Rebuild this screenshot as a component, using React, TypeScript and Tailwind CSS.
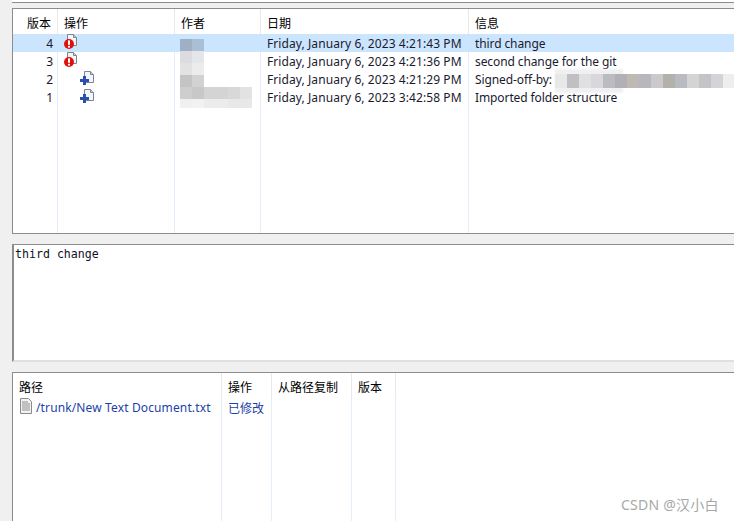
const uiFont = "font-['Noto_Sans','Noto_Sans_CJK_SC',sans-serif]";

const revisions = [
  { rev: '4', kind: 'error', date: 'Friday, January 6, 2023 4:21:43 PM', msg: 'third change' },
  { rev: '3', kind: 'error', date: 'Friday, January 6, 2023 4:21:36 PM', msg: 'second change for the git' },
  { rev: '2', kind: 'add', date: 'Friday, January 6, 2023 4:21:29 PM', msg: 'Signed-off-by:' },
  { rev: '1', kind: 'add', date: 'Friday, January 6, 2023 3:42:58 PM', msg: 'Imported folder structure' },
];

const authorMosaic = [
  ['#a0b0c4', '#aabfd4', '', '', '', ''],
  ['#dcdce0', '#e4e6ea', '', '', '', ''],
  ['#e2e2e2', '#ececec', '', '', '', ''],
  ['#c4c4c6', '#d2d2d2', '', '', '', ''],
  ['#cecece', '#c8c8c8', '#d4d4d4', '#d4d4d4', '#d8d8d8', '#e2e2e2'],
  ['#f0f0f2', '#f2f2f2', '#ececec', '#ececec', '#e8e8e8', '#e8e8e8'],
];

const signedMosaic = [
  '#e8e8e8', '#c0c0c2', '#e0e0e2', '#d8d8da', '#bcbcc0', '#b0b0b6', '#c0b8b4', '#b8b8bc',
  '#cacaca', '#b4b0ac', '#b8bcc0', '#d4d4d4', '#c4c4c8', '#d4d4d6', '#eeeeee',
];

function PageIcon() {
  return (
    <svg width="10" height="12" viewBox="0 0 10 12" className="block">
      <path d="M.5.5h6l3 3v8h-9z" fill="#f4f5f7" stroke="#7b8496" />
      <path d="M6.5.5v3h3" fill="#c9ced8" stroke="#7b8496" />
    </svg>
  );
}

function ErrorIcon() {
  return (
    <span className="relative block w-[16px] h-[16px]">
      <span className="absolute left-[3px] top-[-1px]">
        <PageIcon />
      </span>
      <svg width="10" height="10" viewBox="0 0 10 10" className="absolute left-0 top-[4px]">
        <circle cx="5" cy="5" r="5" fill="#e0110c" />
        <rect x="4" y="1.4" width="2" height="4.4" fill="#fff" />
        <rect x="4" y="6.8" width="2" height="1.8" fill="#fff" />
      </svg>
    </span>
  );
}

function AddIcon() {
  return (
    <span className="relative block w-[16px] h-[16px]">
      <span className="absolute left-[4px] top-0">
        <PageIcon />
      </span>
      <svg width="9" height="9" viewBox="0 0 9 9" className="absolute left-0 top-[5px]">
        <path d="M3 0h3v3h3v3H6v3H3V6H0V3h3z" fill="#2a4fb0" />
      </svg>
    </span>
  );
}

function DocIcon() {
  return (
    <svg width="12" height="16" viewBox="0 0 12 16" className="shrink-0 mt-[1px]">
      <path d="M.5.5h8l3 3v12H.5z" fill="#f2f2f2" stroke="#8a8a8a" />
      <path d="M2 4h6M2 6h8M2 8h8M2 10h8M2 12h8" stroke="#8f8f8f" />
    </svg>
  );
}

function LogTable() {
  return (
    <div className="relative h-[227px] border border-r-0 border-[#8c8c8c] bg-white overflow-hidden">
      <div className="flex h-[25px] text-[12px] text-black">
        <div className="w-[45px] h-full border-r border-[#e8e8e8] pr-[6px] pt-[5px] flex items-center justify-end">版本</div>
        <div className="w-[117px] h-full border-r border-[#e8e8e8] pl-[6px] pt-[5px] flex items-center">操作</div>
        <div className="w-[86px] h-full border-r border-[#e8e8e8] pl-[6px] pt-[5px] flex items-center">作者</div>
        <div className="w-[208px] h-full border-r border-[#e8e8e8] pl-[6px] pt-[5px] flex items-center">日期</div>
        <div className="pl-[6px] pt-[5px] flex items-center h-full">信息</div>
      </div>
      <div className="relative">
        <div className="absolute inset-0 h-[199px] flex pointer-events-none">
          <div className="w-[45px] border-r border-[#e3eefa]" />
          <div className="w-[117px] border-r border-[#e3eefa]" />
          <div className="w-[86px] border-r border-[#e3eefa]" />
          <div className="w-[208px] border-r border-[#e3eefa]" />
        </div>
        {revisions.map((r, i) => (
          <div
            key={r.rev}
            className={`relative flex h-[18px] items-center text-[12px] text-[#1a1a2e] ${i === 0 ? 'bg-[#cce5ff]' : ''}`}
          >
            <div className="w-[45px] pr-[5px] pt-[2px] text-right">{r.rev}</div>
            <div className={`w-[117px] ${r.kind === 'add' ? 'pl-[22px]' : 'pl-[6px]'}`}>
              {r.kind === 'error' ? <ErrorIcon /> : <AddIcon />}
            </div>
            <div className="w-[86px]" />
            <div className="w-[208px] pl-[6px] pt-[2px] whitespace-nowrap tracking-[0.08px]">{r.date}</div>
            <div className="pl-[6px] pt-[2px] whitespace-nowrap tracking-[-0.1px]">{r.msg}</div>
          </div>
        ))}
      </div>

      {/* blurred author names */}
      <div className="absolute left-[167px] top-[30px] blur-[0.6px]">
        {authorMosaic.map((row, y) => (
          <div key={y} className={`flex ${y === 5 ? 'h-[9px]' : 'h-[12px]'}`}>
            {row.map((c, x) => (
              <div key={x} className="w-[12px] h-full" style={{ backgroundColor: c || 'transparent' }} />
            ))}
          </div>
        ))}
      </div>
      {/* blurred email */}
      <div className="absolute left-[542px] top-[60px] w-[68px] h-[24px] bg-[#f0f0f2] blur-[1px]" />
      <div className="absolute left-[542px] top-[65px] flex h-[14px] blur-[0.5px]">
        {signedMosaic.map((c, x) => (
          <div key={x} className="w-[12px] h-full" style={{ backgroundColor: c }} />
        ))}
      </div>
    </div>
  );
}

function MessagePanel() {
  return (
    <div className="h-[118px] border-t border-l-2 border-[#8c8c8c] bg-white border-b-2 border-b-[#e0e0e0] pl-[1px] pt-[2px]">
      <p className="font-['DejaVu_Sans_Mono',monospace] text-[11.6px] leading-[15px] text-[#101028]">third change</p>
    </div>
  );
}

function ChangedPaths() {
  return (
    <div className="flex-1 border-t border-l border-[#8c8c8c] bg-white text-[12px]">
      <div className="flex h-[24px] text-black">
        <div className="w-[209px] border-r border-[#e8e8e8] pl-[6px] pt-[6px] flex items-center">路径</div>
        <div className="w-[50px] border-r border-[#e8e8e8] pl-[6px] pt-[6px] flex items-center">操作</div>
        <div className="w-[80px] border-r border-[#e8e8e8] pl-[6px] pt-[6px] flex items-center">从路径复制</div>
        <div className="w-[44px] border-r border-[#e8e8e8] pl-[6px] pt-[6px] flex items-center">版本</div>
      </div>
      <div className="flex h-[124px] text-[#1d3fa8]">
        <div className="w-[209px] border-r border-[#e3eefa] pl-[7px] flex items-start gap-[4px] whitespace-nowrap leading-[18px]">
          <DocIcon />
          <span className="tracking-[0.13px] pt-[2px]">/trunk/New Text Document.txt</span>
        </div>
        <div className="w-[50px] border-r border-[#e3eefa] pl-[6px] pt-[2px] leading-[20px]">已修改</div>
        <div className="w-[80px] border-r border-[#e3eefa]" />
        <div className="w-[44px] border-r border-[#e3eefa]" />
      </div>
    </div>
  );
}

export default function App() {
  return (
    <div className={`relative w-[734px] h-[521px] overflow-hidden bg-[#f0f0f0] pl-[12px] flex flex-col ${uiFont}`}>
      <div className="h-[3px] border-b border-[#8c8c8c] bg-white mb-[5px]" />
      <LogTable />
      <div className="h-[10px]" />
      <MessagePanel />
      <div className="h-[10px]" />
      <ChangedPaths />
      <div className="absolute left-[621px] top-[495px] text-[14px] leading-[20px] tracking-[0.25px] text-[#a8a8a8] whitespace-nowrap">
        CSDN @汉小白
      </div>
    </div>
  );
}
